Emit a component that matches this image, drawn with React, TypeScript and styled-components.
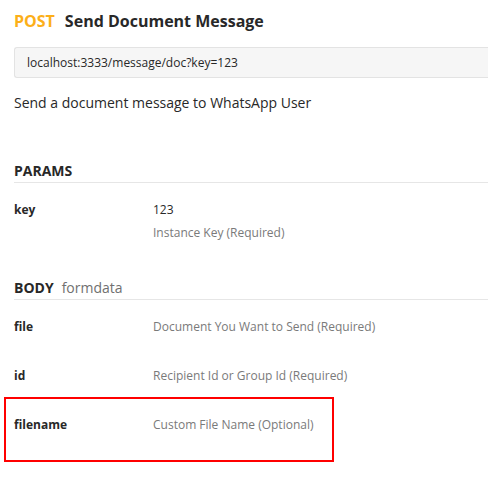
import styled, { createGlobalStyle } from 'styled-components';

const GlobalStyle = createGlobalStyle`
  html, body {
    margin: 0;
    padding: 0;
    background: #ffffff;
  }
  body {
    font-family: 'Open Sans', 'DejaVu Sans', sans-serif;
    color: #282828;
    -webkit-font-smoothing: antialiased;
  }
`;

interface Field {
  name: string;
  value?: string;
  description: string;
  highlighted?: boolean;
}

const params: Field[] = [
  { name: 'key', value: '123', description: 'Instance Key (Required)' },
];

const bodyFields: Field[] = [
  { name: 'file', description: 'Document You Want to Send (Required)' },
  { name: 'id', description: 'Recipient Id or Group Id (Required)' },
  { name: 'filename', description: 'Custom File Name (Optional)', highlighted: true },
];

const Page = styled.div`
  padding: 9px 0 40px 14px;
  min-height: 494px;
  box-sizing: border-box;
`;

const Title = styled.h1`
  margin: 0;
  font-size: 16px;
  font-weight: 700;
  line-height: 24px;
  color: #282828;
  display: flex;
  gap: 10px;
`;

const Method = styled.span`
  color: #fcaf19;
`;

const Url = styled.div`
  margin-top: 14px;
  height: 31px;
  box-sizing: border-box;
  border: 1px solid #e3e3e3;
  border-right: none;
  border-radius: 3px 0 0 3px;
  background: #f6f6f6;
  padding: 0 12px;
  display: flex;
  align-items: center;
  font-size: 12px;
  color: #282828;
`;

const Description = styled.p`
  margin: 14px 0 0;
  font-size: 14px;
  line-height: 22px;
  color: #282828;
`;

const Section = styled.section`
  margin-top: 47px;

  & + & {
    margin-top: 23px;
  }
`;

const SectionHead = styled.div`
  font-size: 14px;
  font-weight: 700;
  line-height: 20px;
  padding-bottom: 1px;
  border-bottom: 1px solid #e6e6e6;
  color: #282828;
`;

const SubType = styled.span`
  font-weight: 400;
  font-size: 14px;
  color: #707070;
  margin-left: 8px;
`;

const Row = styled.div<{ $highlighted?: boolean }>`
  position: relative;
  display: grid;
  grid-template-columns: 139px 1fr;
  padding: 17px 0 12px;

  ${({ $highlighted }) =>
    $highlighted &&
    `
    &::after {
      content: '';
      position: absolute;
      left: -10px;
      top: -1px;
      width: 330px;
      height: 65px;
      box-sizing: border-box;
      border: 2.5px solid #ff0000;
      pointer-events: none;
    }
  `}
`;

const Name = styled.div`
  font-size: 12px;
  font-weight: 700;
  line-height: 20px;
  color: #282828;
`;

const Details = styled.div`
  display: flex;
  flex-direction: column;
  gap: 3px;
`;

const Value = styled.div`
  font-size: 12px;
  line-height: 20px;
  color: #282828;
`;

const Hint = styled.div`
  font-size: 12px;
  line-height: 20px;
  color: #7a7a7a;
`;

const FieldRow = ({ field }: { field: Field }): JSX.Element => (
  <Row $highlighted={field.highlighted}>
    <Name>{field.name}</Name>
    <Details>
      {field.value && <Value>{field.value}</Value>}
      <Hint>{field.description}</Hint>
    </Details>
  </Row>
);

const App = (): JSX.Element => (
  <>
    <GlobalStyle />
    <Page>
      <Title>
        <Method>POST</Method>
        <span>Send Document Message</span>
      </Title>
      <Url>localhost:3333/message/doc?key=123</Url>
      <Description>Send a document message to WhatsApp User</Description>

      <Section>
        <SectionHead>PARAMS</SectionHead>
        {params.map((p) => (
          <FieldRow key={p.name} field={p} />
        ))}
      </Section>

      <Section>
        <SectionHead>
          BODY<SubType>formdata</SubType>
        </SectionHead>
        {bodyFields.map((p) => (
          <FieldRow key={p.name} field={p} />
        ))}
      </Section>
    </Page>
  </>
);

export default App;
